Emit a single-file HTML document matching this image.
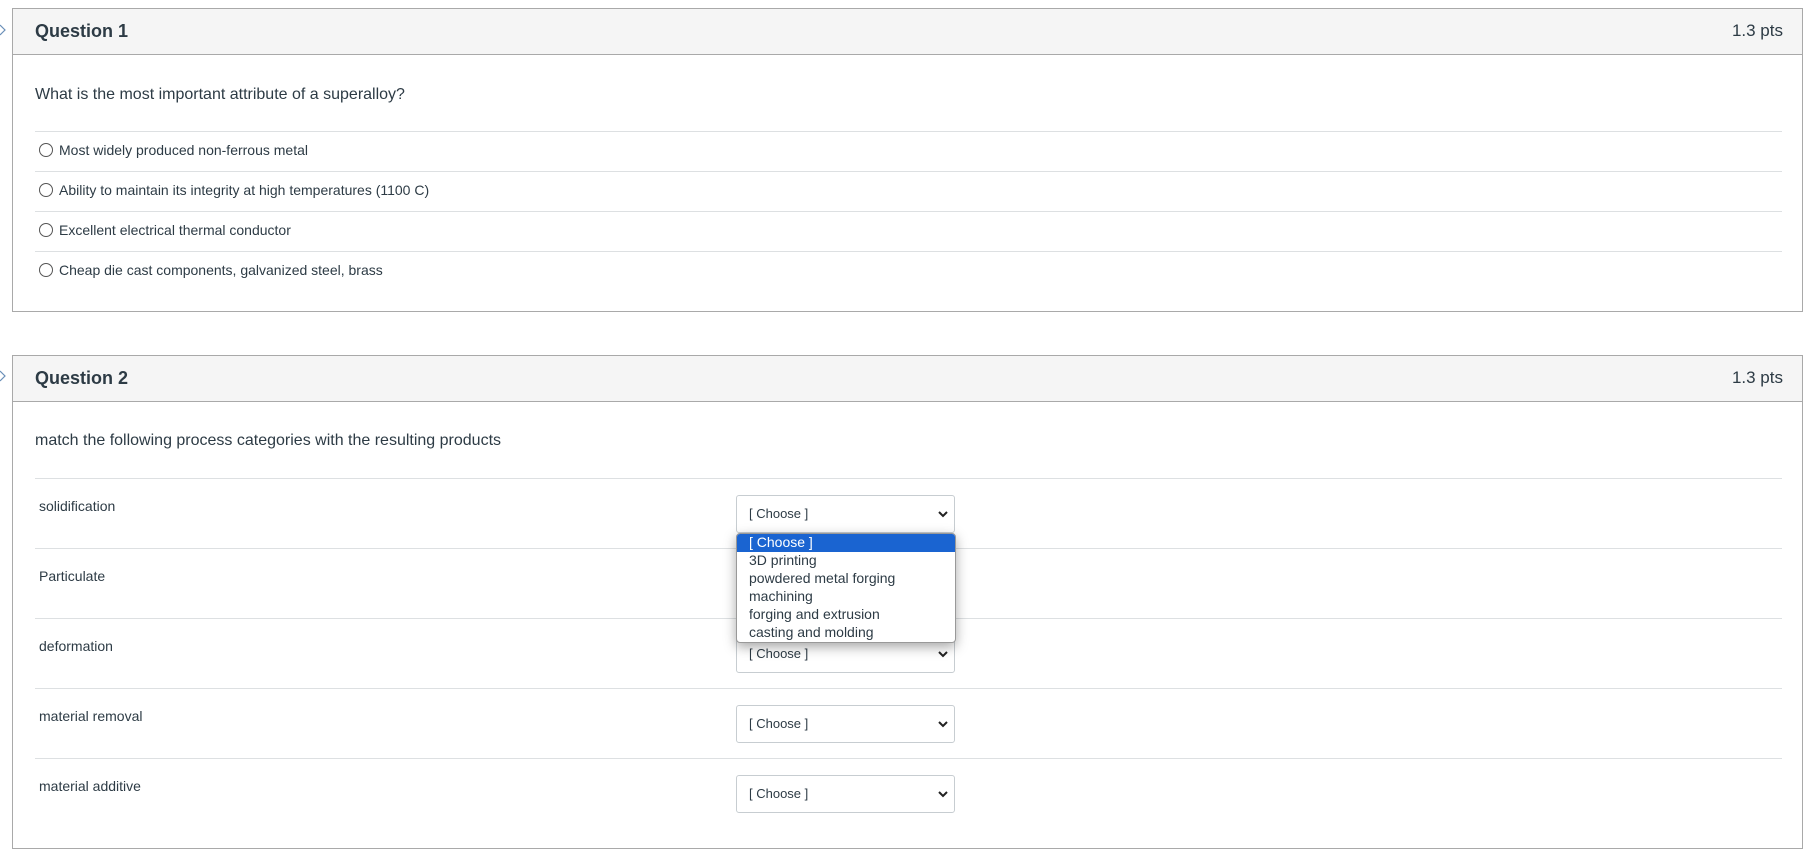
<!DOCTYPE html>
<html><head><style>
body{margin:0;width:1817px;height:861px;background:#fff;font-family:"Liberation Sans",sans-serif;color:#2d3b45;position:relative;overflow:hidden}
.box{position:absolute;left:12px;width:1791px;border:1px solid #a9a9a9;box-sizing:border-box;background:#fff}
.hd{position:absolute;left:0;right:0;top:0;height:45px;background:#f5f5f5;border-bottom:1px solid #a9a9a9}
.hd .t{position:absolute;left:22px;top:12px;font-size:18px;font-weight:bold;color:#2d3b45}
.hd .p{position:absolute;right:19px;top:12px;font-size:17px;color:#2d3b45}
.abs{position:absolute}
.line{position:absolute;left:22px;right:20px;height:1px;background:#dde0e2}
.ans{position:absolute;left:26px;font-size:14px}
.ans i{position:absolute;left:0;top:1px;width:14px;height:14px;border:1px solid #555;border-radius:50%;box-sizing:border-box}
.ans span{position:absolute;left:20px;white-space:nowrap}
.lbl{position:absolute;left:26px;font-size:14px}
.sel{position:absolute;left:723px;width:219px;height:38px;border:1px solid #c7cdd1;border-radius:3px;box-sizing:border-box;font-size:13px;color:#2d3b45;background:#fff}
.sel span{position:absolute;left:12px;top:10px}
.sel svg{position:absolute;right:6px;top:15px}
.dd{position:absolute;left:736px;top:533px;width:218px;height:108px;border:1px solid #999;border-radius:4px;background:#fff;box-shadow:0 4px 12px rgba(0,0,0,.35);font-size:14px;color:#2d3b45;overflow:hidden}
.dd div{height:18px;line-height:17px;padding-left:12px}
.dd .on{background:#1a64d1;color:#fff}
</style></head><body>
<svg class="abs" style="left:0;top:24px" width="6" height="12"><path d="M0 1 L5 6 L0 11" fill="none" stroke="#6a8fb8" stroke-width="1.2"/></svg>
<svg class="abs" style="left:0;top:370px" width="6" height="12"><path d="M0 1 L5 6 L0 11" fill="none" stroke="#6a8fb8" stroke-width="1.2"/></svg>

<div class="box" style="top:8px;height:304px">
 <div class="hd"><div class="t">Question 1</div><div class="p">1.3 pts</div></div>
 <div class="abs" style="left:22px;top:77px;font-size:16px">What is the most important attribute of a superalloy?</div>
 <div class="line" style="top:122px"></div>
 <div class="ans" style="top:133px"><i></i><span>Most widely produced non-ferrous metal</span></div>
 <div class="line" style="top:162px"></div>
 <div class="ans" style="top:173px"><i></i><span>Ability to maintain its integrity at high temperatures (1100 C)</span></div>
 <div class="line" style="top:202px"></div>
 <div class="ans" style="top:213px"><i></i><span>Excellent electrical thermal conductor</span></div>
 <div class="line" style="top:242px"></div>
 <div class="ans" style="top:253px"><i></i><span>Cheap die cast components, galvanized steel, brass</span></div>
</div>

<div class="box" style="top:355px;height:494px">
 <div class="hd"><div class="t">Question 2</div><div class="p">1.3 pts</div></div>
 <div class="abs" style="left:22px;top:76px;font-size:16px">match the following process categories with the resulting products</div>
 <div class="line" style="top:122px"></div>
 <div class="lbl" style="top:142px">solidification</div>
 <div class="sel" style="top:139px"><span>[ Choose ]</span><svg width="10" height="7"><path d="M1 1 L5 5 L9 1" fill="none" stroke="#222" stroke-width="2"/></svg></div>
 <div class="line" style="top:192px"></div>
 <div class="lbl" style="top:212px">Particulate</div>
 <div class="sel" style="top:209px"><span>[ Choose ]</span><svg width="10" height="7"><path d="M1 1 L5 5 L9 1" fill="none" stroke="#222" stroke-width="2"/></svg></div>
 <div class="line" style="top:262px"></div>
 <div class="lbl" style="top:282px">deformation</div>
 <div class="sel" style="top:279px"><span>[ Choose ]</span><svg width="10" height="7"><path d="M1 1 L5 5 L9 1" fill="none" stroke="#222" stroke-width="2"/></svg></div>
 <div class="line" style="top:332px"></div>
 <div class="lbl" style="top:352px">material removal</div>
 <div class="sel" style="top:349px"><span>[ Choose ]</span><svg width="10" height="7"><path d="M1 1 L5 5 L9 1" fill="none" stroke="#222" stroke-width="2"/></svg></div>
 <div class="line" style="top:402px"></div>
 <div class="lbl" style="top:422px">material additive</div>
 <div class="sel" style="top:419px"><span>[ Choose ]</span><svg width="10" height="7"><path d="M1 1 L5 5 L9 1" fill="none" stroke="#222" stroke-width="2"/></svg></div>
</div>

<div class="dd">
 <div class="on">[ Choose ]</div>
 <div>3D printing</div>
 <div>powdered metal forging</div>
 <div>machining</div>
 <div>forging and extrusion</div>
 <div>casting and molding</div>
</div>
</body></html>
